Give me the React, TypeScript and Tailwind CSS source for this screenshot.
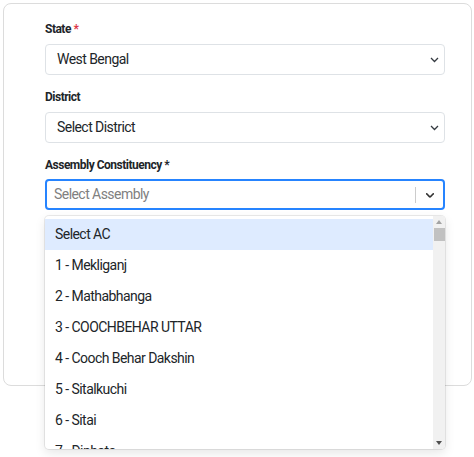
import React from "react";

const options = [
  "Select AC",
  "1 - Mekliganj",
  "2 - Mathabhanga",
  "3 - COOCHBEHAR UTTAR",
  "4 - Cooch Behar Dakshin",
  "5 - Sitalkuchi",
  "6 - Sitai",
  "7 - Dinhata",
];

const SmallChevron = () => (
  <svg width="9" height="6" viewBox="0 0 9 6" fill="none">
    <path d="M1 1l3.5 3.5L8 1" stroke="#343a40" strokeWidth="1.3" />
  </svg>
);

const NativeSelect = ({ value }: { value: string }) => (
  <div className="flex h-[31px] w-[400px] items-center justify-between rounded-[4px] border border-[#dee2e6] bg-white pl-[11px] pr-[5px] text-[14px] tracking-[-0.55px] text-[#212529]">
    <span>{value}</span>
    <SmallChevron />
  </div>
);

const Label = ({ text, required, redStar }: { text: string; required?: boolean; redStar?: boolean }) => (
  <div className="h-[18px] text-[12px] leading-[18px] font-bold tracking-[-0.5px] text-[#212529]">
    {text}
    {required && <span className={redStar ? "text-[#dc3545]" : "text-[#212529]"}> *</span>}
  </div>
);

export default function App() {
  return (
    <div className="min-h-[457px] bg-white pt-[3px] pl-[3px]" style={{ fontFamily: "Roboto, 'Liberation Sans', sans-serif" }}>
      <div className="relative h-[383px] w-[469px] rounded-[8px] border border-[#dcdcdc] bg-white pt-[16px] pl-[41px]">
        <Label text="State" required redStar />
        <div className="h-[6px]" />
        <NativeSelect value="West Bengal" />
        <div className="h-[13px]" />
        <Label text="District" />
        <div className="h-[6px]" />
        <NativeSelect value="Select District" />
        <div className="h-[13px]" />
        <Label text="Assembly Constituency" required />
        <div className="h-[5px]" />
        <div className="relative w-[400px]">
          <div className="flex h-[31px] items-center rounded-[4px] border-2 border-[#2684ff] bg-white pl-[7px] text-[14px] tracking-[-0.55px]">
            <span className="flex-1 text-[#808080]">Select Assembly</span>
            <span className="h-[16px] w-px bg-[#cccccc]" />
            <span className="flex w-[27px] items-center justify-center">
              <svg width="14" height="14" viewBox="0 0 20 20">
                <path
                  d="M4.516 7.548c0.436-0.446 1.043-0.481 1.576 0l3.908 3.747 3.908-3.747c0.533-0.481 1.141-0.446 1.574 0 0.436 0.445 0.408 1.197 0 1.615-0.406 0.418-4.695 4.502-4.695 4.502-0.217 0.223-0.502 0.335-0.787 0.335s-0.57-0.112-0.789-0.335c0 0-4.287-4.084-4.695-4.502s-0.436-1.17 0-1.615z"
                  fill="#333333"
                />
              </svg>
            </span>
          </div>
          <div className="absolute top-[37px] left-0 z-10 flex h-[233px] w-[400px] overflow-hidden rounded-[4px] bg-white shadow-[0_0_0_1px_rgba(0,0,0,0.08),0_4px_11px_rgba(0,0,0,0.1)]">
            <div className="flex-1 pt-[3px]">
              {options.map((o, i) => (
                <div
                  key={o}
                  className={`flex h-[31px] items-center pl-[10px] text-[14px] tracking-[-0.55px] text-[#212529] ${i === 0 ? "bg-[#deebff]" : ""}`}
                >
                  {o}
                </div>
              ))}
            </div>
            <div className="flex w-[12px] flex-col items-center bg-[#f1f1f1]">
              <div className="flex h-[12px] items-center justify-center">
                <span className="h-0 w-0 border-x-[3.5px] border-b-[4px] border-x-transparent border-b-[#a3a3a3]" />
              </div>
              <div className="h-[13px] w-[11px] bg-[#c1c1c1]" />
              <div className="flex-1" />
              <div className="flex h-[12px] items-center justify-center">
                <span className="h-0 w-0 border-x-[3.5px] border-t-[4px] border-x-transparent border-t-[#505050]" />
              </div>
            </div>
          </div>
        </div>
      </div>
    </div>
  );
}
